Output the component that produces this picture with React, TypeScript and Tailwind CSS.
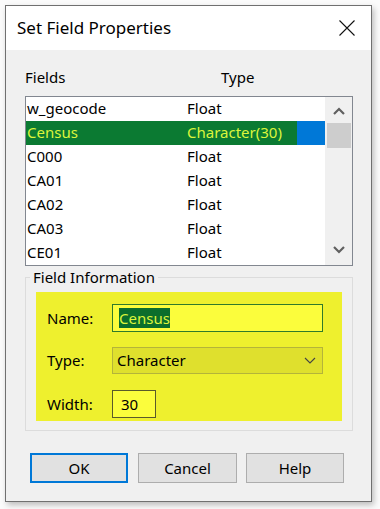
import React from "react";

const ROWS: { name: string; type: string; selected?: boolean }[] = [
  { name: "w_geocode", type: "Float" },
  { name: "Census", type: "Character(30)", selected: true },
  { name: "C000", type: "Float" },
  { name: "CA01", type: "Float" },
  { name: "CA02", type: "Float" },
  { name: "CA03", type: "Float" },
  { name: "CE01", type: "Float" },
];

const FONT = { fontFamily: '"Noto Sans", "Open Sans", sans-serif' };

function Chevron({ up }: { up?: boolean }) {
  return (
    <svg width="12" height="8" viewBox="0 0 12 8" className="block">
      <polyline
        points={up ? "1,7 6,2 11,7" : "1,1 6,6 11,1"}
        fill="none"
        stroke="#606060"
        strokeWidth="2.2"
      />
    </svg>
  );
}

function FieldList() {
  return (
    <div className="flex h-[170px] w-[328px] border border-[#828790] bg-white">
      <div className="flex w-[299px] flex-col">
        {ROWS.map((row) => (
          <div
            key={row.name}
            className={
              row.selected
                ? "flex h-[24px] items-center bg-[#0078d7] text-[#dcf53c]"
                : "flex h-[24px] items-center text-black"
            }
          >
            <div
              className={
                row.selected
                  ? "flex h-full w-[271px] items-center bg-[#0b7a32] pb-[2px]"
                  : "flex h-full w-[271px] items-center pb-[2px]"
              }
            >
              <span className="w-[161px] pl-[1px]">{row.name}</span>
              <span>{row.type}</span>
            </div>
          </div>
        ))}
      </div>
      <div className="flex w-[27px] flex-col items-center bg-[#f0f0f0]">
        <div className="flex h-[26px] items-center justify-center pt-[2px]">
          <Chevron up />
        </div>
        <div className="h-[25px] w-[24px] bg-[#cdcdcd]" />
        <div className="flex-1" />
        <div className="flex h-[26px] items-center justify-center pb-[4px]">
          <Chevron />
        </div>
      </div>
    </div>
  );
}

export default function App() {
  return (
    <div className="h-[509px] w-[380px] overflow-hidden bg-[#fbfbfb] pl-[5px] pt-[5px]" style={FONT}>
      <div className="flex h-[497px] w-[367px] flex-col border border-[#707070] bg-[#f0f0f0] shadow-[2px_3px_6px_rgba(0,0,0,0.25)]">
        <div className="flex h-[44px] items-center justify-between bg-white pl-[11px] pr-[16px]">
          <span className="text-[17px] text-black">Set Field Properties</span>
          <svg width="16" height="16" viewBox="0 0 16 16">
            <path d="M0.5 0.5 L15.5 15.5 M15.5 0.5 L0.5 15.5" stroke="#111" strokeWidth="1.1" />
          </svg>
        </div>

        <div className="flex flex-col pl-[19px] pt-[17px] text-[15px]">
          <div className="flex h-[20px] items-center">
            <span className="w-[196px]">Fields</span>
            <span>Type</span>
          </div>
          <div className="mt-[9px]">
            <FieldList />
          </div>

          <fieldset className="mt-[1px] h-[164px] w-[328px] border border-[#dcdcdc] px-[10px] pb-[9px]">
            <legend className="-ml-[6px] px-[3px] leading-[20px]">Field Information</legend>
            <div className="mt-[5px] flex h-[129px] flex-col bg-[#eef02e] pl-[11px] pt-[12px]">
              <div className="flex h-[28px] items-center">
                <span className="w-[65px]">Name:</span>
                <div className="flex h-[28px] w-[211px] items-center border-[1.5px] border-[#2f7a2a] bg-[#fbfd3c] pl-[6px]">
                  <span className="bg-[#0b6e2c] leading-[20px] text-[#dcf53c]">Census</span>
                </div>
              </div>
              <div className="mt-[15px] flex h-[27px] items-center">
                <span className="w-[65px]">Type:</span>
                <div className="flex h-[27px] w-[211px] items-center justify-between border border-[#b4b43a] bg-[#dfe02d] pl-[4px] pr-[6px]">
                  <span>Character</span>
                  <svg width="12" height="7" viewBox="0 0 12 7">
                    <polyline points="1,1 6,6 11,1" fill="none" stroke="#444" strokeWidth="1.1" />
                  </svg>
                </div>
              </div>
              <div className="mt-[16px] flex h-[28px] items-center">
                <span className="w-[65px]">Width:</span>
                <div className="flex h-[28px] w-[44px] items-center border border-[#5a5a2a] bg-[#fbfd3c] pl-[8px]">
                  30
                </div>
              </div>
            </div>
          </fieldset>

          <div className="mt-[22px] flex items-center pl-[5px]">
            <button className="h-[30px] w-[98px] border-2 border-[#0078d7] bg-[#e1e1e1] text-[15px]">OK</button>
            <button className="ml-[10px] h-[30px] w-[99px] border border-[#adadad] bg-[#e1e1e1] text-[15px]">
              Cancel
            </button>
            <button className="ml-[9px] h-[30px] w-[98px] border border-[#adadad] bg-[#e1e1e1] text-[15px]">
              Help
            </button>
          </div>
        </div>
      </div>
    </div>
  );
}
